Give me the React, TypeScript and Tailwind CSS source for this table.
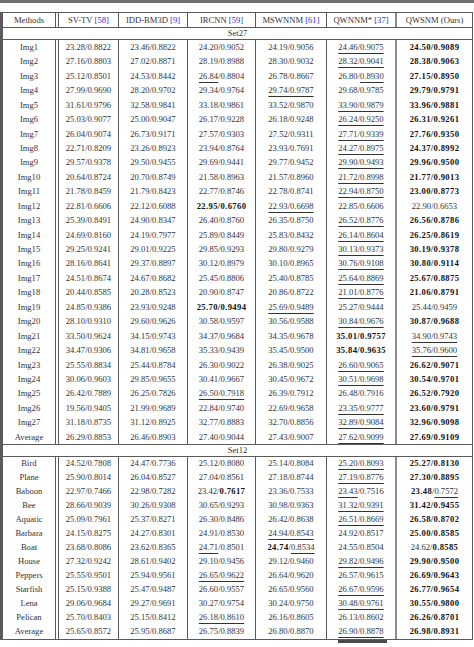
import React from "react";

// cell format: "value" plain, "value b" bold, "value u" underlined,
// "value xy" per part (x = PSNR, y = SSIM; n / b / u)
const set27: string[][] = [
  ["Img1", "23.28/0.8822", "23.46/0.8822", "24.20/0.9052", "24.19/0.9056", "24.46/0.9075 u", "24.50/0.9089 b"],
  ["Img2", "27.16/0.8803", "27.02/0.8871", "28.19/0.8988", "28.30/0.9032", "28.32/0.9041 u", "28.38/0.9063 b"],
  ["Img3", "25.12/0.8501", "24.53/0.8442", "26.84/0.8804 un", "26.78/0.8667", "26.80/0.8930 nu", "27.15/0.8950 b"],
  ["Img4", "27.99/0.9690", "28.20/0.9702", "29.34/0.9764", "29.74/0.9787 u", "29.68/0.9785", "29.79/0.9791 b"],
  ["Img5", "31.61/0.9796", "32.58/0.9841", "33.18/0.9861", "33.52/0.9870", "33.90/0.9879 u", "33.96/0.9881 b"],
  ["Img6", "25.03/0.9077", "25.00/0.9047", "26.17/0.9228", "26.18/0.9248", "26.24/0.9250 u", "26.31/0.9261 b"],
  ["Img7", "26.04/0.9074", "26.73/0.9171", "27.57/0.9303", "27.52/0.9311", "27.71/0.9339 u", "27.76/0.9350 b"],
  ["Img8", "22.71/0.8209", "23.26/0.8923", "23.94/0.8764", "23.93/0.7691", "24.27/0.8975 u", "24.37/0.8992 b"],
  ["Img9", "29.57/0.9378", "29.50/0.9455", "29.69/0.9441", "29.77/0.9452", "29.90/0.9493 u", "29.96/0.9500 b"],
  ["Img10", "20.64/0.8724", "20.70/0.8749", "21.58/0.8963", "21.57/0.8960", "21.72/0.8998 u", "21.77/0.9013 b"],
  ["Img11", "21.78/0.8459", "21.79/0.8423", "22.77/0.8746", "22.78/0.8741", "22.94/0.8750 u", "23.00/0.8773 b"],
  ["Img12", "22.81/0.6606", "22.12/0.6088", "22.95/0.6760 b", "22.93/0.6698 u", "22.85/0.6606", "22.90/0.6653"],
  ["Img13", "25.39/0.8491", "24.90/0.8347", "26.40/0.8760", "26.35/0.8750", "26.52/0.8776 u", "26.56/0.8786 b"],
  ["Img14", "24.69/0.8160", "24.19/0.7977", "25.89/0.8449", "25.83/0.8432", "26.14/0.8604 u", "26.25/0.8619 b"],
  ["Img15", "29.25/0.9241", "29.01/0.9225", "29.85/0.9293", "29.80/0.9279", "30.13/0.9373 u", "30.19/0.9378 b"],
  ["Img16", "28.16/0.8641", "29.37/0.8897", "30.12/0.8979", "30.10/0.8965", "30.76/0.9108 u", "30.80/0.9114 b"],
  ["Img17", "24.51/0.8674", "24.67/0.8682", "25.45/0.8806", "25.40/0.8785", "25.64/0.8869 u", "25.67/0.8875 b"],
  ["Img18", "20.44/0.8585", "20.28/0.8523", "20.90/0.8747", "20.86/0.8722", "21.01/0.8776 u", "21.06/0.8791 b"],
  ["Img19", "24.85/0.9386", "23.93/0.9248", "25.70/0.9494 b", "25.69/0.9489 u", "25.27/0.9444", "25.44/0.9459"],
  ["Img20", "28.10/0.9310", "29.60/0.9626", "30.58/0.9597", "30.56/0.9588", "30.84/0.9676 u", "30.87/0.9688 b"],
  ["Img21", "33.50/0.9624", "34.15/0.9743", "34.37/0.9684", "34.35/0.9678", "35.01/0.9757 b", "34.90/0.9743 u"],
  ["Img22", "34.47/0.9306", "34.81/0.9658", "35.33/0.9439", "35.45/0.9500", "35.84/0.9635 b", "35.76/0.9600 u"],
  ["Img23", "25.55/0.8834", "25.44/0.8784", "26.30/0.9022", "26.38/0.9025", "26.60/0.9065 u", "26.62/0.9071 b"],
  ["Img24", "30.06/0.9603", "29.85/0.9655", "30.41/0.9667", "30.45/0.9672", "30.51/0.9698 u", "30.54/0.9701 b"],
  ["Img25", "26.42/0.7889", "26.25/0.7826", "26.50/0.7918 u", "26.39/0.7912", "26.48/0.7916", "26.52/0.7920 b"],
  ["Img26", "19.56/0.9405", "21.99/0.9689", "22.84/0.9740", "22.69/0.9658", "23.35/0.9777 u", "23.60/0.9791 b"],
  ["Img27", "31.18/0.8735", "31.12/0.8925", "32.77/0.8883", "32.70/0.8856", "32.89/0.9084 u", "32.96/0.9098 b"],
  ["Average", "26.29/0.8853", "26.46/0.8903", "27.40/0.9044", "27.43/0.9007", "27.62/0.9099 u", "27.69/0.9109 b"],
];

const set12: string[][] = [
  ["Bird", "24.52/0.7808", "24.47/0.7736", "25.12/0.8080", "25.14/0.8084", "25.20/0.8093 u", "25.27/0.8130 b"],
  ["Plane", "25.90/0.8014", "26.04/0.8527", "27.04/0.8561", "27.18/0.8744", "27.19/0.8776 u", "27.30/0.8895 b"],
  ["Baboon", "22.97/0.7466", "22.98/0.7282", "23.42/0.7617 nb", "23.36/0.7533", "23.43/0.7516 un", "23.48/0.7572 bu"],
  ["Bee", "28.66/0.9039", "30.26/0.9308", "30.65/0.9293", "30.98/0.9363", "31.32/0.9391 u", "31.42/0.9455 b"],
  ["Aquatic", "25.09/0.7961", "25.37/0.8271", "26.30/0.8486", "26.42/0.8638", "26.51/0.8669 u", "26.58/0.8702 b"],
  ["Barbara", "24.15/0.8275", "24.27/0.8301", "24.91/0.8530", "24.94/0.8543 u", "24.92/0.8517", "25.00/0.8585 b"],
  ["Boat", "23.68/0.8086", "23.62/0.8365", "24.71/0.8501 un", "24.74/0.8534 bu", "24.55/0.8504", "24.62/0.8585 nb"],
  ["House", "27.32/0.9242", "28.61/0.9402", "29.10/0.9456", "29.12/0.9460", "29.82/0.9496 u", "29.90/0.9500 b"],
  ["Peppers", "25.55/0.9501", "25.94/0.9561", "26.65/0.9622 u", "26.64/0.9620", "26.57/0.9615", "26.69/0.9643 b"],
  ["Starfish", "25.15/0.9388", "25.47/0.9487", "26.60/0.9557", "26.65/0.9560", "26.67/0.9596 u", "26.77/0.9654 b"],
  ["Lena", "29.06/0.9684", "29.27/0.9691", "30.27/0.9754", "30.24/0.9750", "30.48/0.9761 u", "30.55/0.9800 b"],
  ["Pelican", "25.70/0.8403", "25.15/0.8412", "26.18/0.8610 u", "26.16/0.8605", "26.13/0.8602", "26.26/0.8701 b"],
  ["Average", "25.65/0.8572", "25.95/0.8687", "26.75/0.8839", "26.80/0.8870", "26.90/0.8878 u", "26.98/0.8931 b"],
];

// column boxes (widths include their right border)
const cols = [
  "w-[56px] border-r-[4px] border-double border-[#5a5a5a]",
  "w-[60px] border-r border-[#5a5a5a]",
  "w-[69px] border-r border-[#5a5a5a]",
  "w-[68px] border-r border-[#5a5a5a]",
  "w-[71px] border-r border-[#5a5a5a]",
  "w-[70px] border-r-2 border-[#8c8c8c]",
  "w-[75px]",
];

const BOLD = "font-bold text-[#111] tracking-[0.35px]";
const UNDER = "underline decoration-1 underline-offset-[2.5px]";

function styleOf(c: string) {
  if (c === "b") return BOLD;
  if (c === "u") return UNDER;
  return "";
}

function Value({ cell }: { cell: string }) {
  const [v, st] = cell.split(" ");
  if (!st) return <span>{v}</span>;
  if (st.length === 1) return <span className={styleOf(st)}>{v}</span>;
  const [p, q] = v.split("/");
  return (
    <span>
      <span className={styleOf(st[0])}>{p}</span>/<span className={styleOf(st[1])}>{q}</span>
    </span>
  );
}

function Cite({ n }: { n: string }) {
  return <span className="text-[#3030d8]">[{n}]</span>;
}

function DataRow({ row, h }: { row: string[]; h: string }) {
  return (
    <div className={`flex ${h}`}>
      {row.map((c, i) => (
        <div key={i} className={`${cols[i]} flex items-center justify-center whitespace-nowrap`}>
          {i === 0 ? <span>{c}</span> : <Value cell={c} />}
        </div>
      ))}
    </div>
  );
}

export default function App() {
  const header: React.ReactNode[] = [
    "Methods",
    <span>SV-TV <Cite n="58" /></span>,
    <span>IDD-BM3D <Cite n="9" /></span>,
    <span>IRCNN <Cite n="59" /></span>,
    <span>MSWNNM <Cite n="61" /></span>,
    <span>QWNNM* <Cite n="37" /></span>,
    "QWSNM (Ours)",
  ];

  return (
    <div
      className="w-[474px] h-[647px] overflow-hidden bg-white text-[#333] text-[8.6px] leading-none"
      style={{ fontFamily: '"Liberation Serif", "Times New Roman", serif' }}
    >
      <div className="h-[3px] bg-[#707070]" />
      <div className="mt-[9px] w-[473px] border-l-[3px] border-r border-t border-b border-[#5a5a5a]">
        {/* header */}
        <div className="flex h-[15px] border-b border-[#5a5a5a]">
          {header.map((hd, i) => (
            <div key={i} className={`${cols[i]} flex items-center justify-center whitespace-nowrap`}>
              {hd}
            </div>
          ))}
        </div>

        <div className="flex h-[12px] items-center justify-center border-b border-[#5a5a5a]">Set27</div>
        {set27.map((r, i) => (
          <DataRow key={i} row={r} h="h-[14.45px]" />
        ))}

        <div className="flex h-[12.5px] items-center justify-center border-t border-b border-[#5a5a5a]">Set12</div>
        {set12.map((r, i) => (
          <DataRow key={i} row={r} h="h-[14px]" />
        ))}
      </div>
      <div className="ml-[338px] h-[3px] w-[49px] bg-[#4a4a4a]" />
    </div>
  );
}
